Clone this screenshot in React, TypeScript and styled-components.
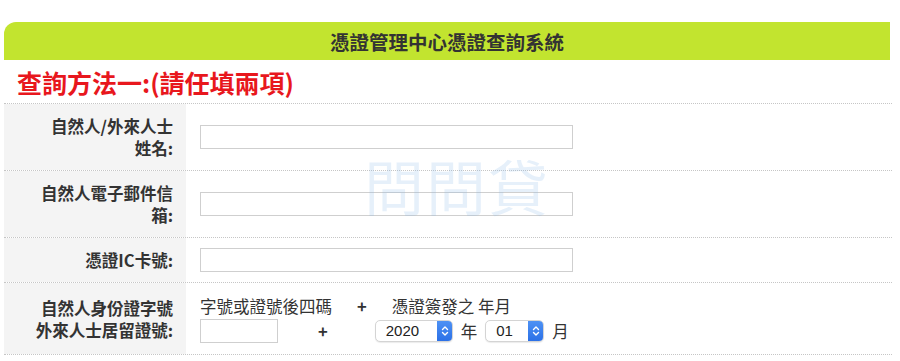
import styled, { createGlobalStyle } from "styled-components";

const Global = createGlobalStyle`
    body {
        margin: 0;
        background: #fff;
        font-family: "Noto Sans CJK TC", "Noto Sans", sans-serif;
        color: #333;
    }
`;

function App() {
    return (
        <>
            <Global />
            <Wrapper>
                <Header>憑證管理中心憑證查詢系統</Header>
                <Title>查詢方法一:(請任填兩項)</Title>
                <Table>
                    <Row $h={66}>
                        <Label>自然人/外來人士<br />姓名:</Label>
                        <Cell><TextInput $w={373} /></Cell>
                    </Row>
                    <Row $h={66}>
                        <Label>自然人電子郵件信<br />箱:</Label>
                        <Cell><TextInput $w={373} /></Cell>
                    </Row>
                    <Row $h={44}>
                        <Label>憑證IC卡號:</Label>
                        <Cell><TextInput $w={373} /></Cell>
                    </Row>
                    <Row $h={71}>
                        <Label>自然人身份證字號<br />外來人士居留證號:</Label>
                        <Cell>
                            <Line>
                                <span>字號或證號後四碼</span>
                                <Plus $left={25} $right={25}>+</Plus>
                                <span>憑證簽發之 年月</span>
                            </Line>
                            <Line>
                                <TextInput $w={78} />
                                <Plus $left={40} $right={47}>+</Plus>
                                <Select $w={78}>
                                    <span>2020</span>
                                    <Stepper><Arrows /></Stepper>
                                </Select>
                                <Unit>年</Unit>
                                <Select $w={59}>
                                    <span>01</span>
                                    <Stepper><Arrows /></Stepper>
                                </Select>
                                <Unit>月</Unit>
                            </Line>
                        </Cell>
                    </Row>
                </Table>
                <Watermark>問問貸</Watermark>
            </Wrapper>
        </>
    );
}

export default App;

function Arrows() {
    return (
        <svg width="8" height="12" viewBox="0 0 8 12">
            <path d="M1.5 4.5 L4 2 L6.5 4.5 M1.5 7.5 L4 10 L6.5 7.5" stroke="#fff" strokeWidth="1.4" fill="none" strokeLinecap="round" strokeLinejoin="round" />
        </svg>
    );
}

const Wrapper = styled.div`
    position: relative;
    width: 888px;
    margin-left: 4px;
    padding-top: 22px;
`;

const Header = styled.div`
    width: 886px;
    height: 38px;
    background: #c2e42f;
    border-top-left-radius: 12px;
    display: flex;
    align-items: center;
    justify-content: center;
    font-size: 19.5px;
    font-weight: 700;
    color: #333;
`;

const Title = styled.div`
    height: 43px;
    display: flex;
    align-items: center;
    padding-left: 13px;
    font-size: 25px;
    font-weight: 700;
    color: #e8171d;
`;

const Table = styled.div`
    border-bottom: 1px dotted #c6c6c6;
`;

const Row = styled.div<{ $h: number }>`
    display: flex;
    height: ${p => p.$h}px;
    border-top: 1px dotted #c6c6c6;
`;

const Label = styled.div`
    width: 169px;
    flex-shrink: 0;
    padding-right: 13px;
    background: #f4f4f4;
    display: flex;
    align-items: center;
    justify-content: flex-end;
    text-align: right;
    font-size: 16.5px;
    font-weight: 700;
    line-height: 22px;
    color: #333;
`;

const Cell = styled.div`
    flex: 1;
    padding-left: 14px;
    display: flex;
    flex-direction: column;
    justify-content: center;
    gap: 2px;
`;

const Line = styled.div`
    display: flex;
    align-items: center;
    font-size: 16.5px;
    color: #333;
    line-height: 22px;
`;

const Plus = styled.span<{ $left: number; $right: number }>`
    font-weight: 700;
    margin: 0 ${p => p.$right}px 0 ${p => p.$left}px;
`;

const TextInput = styled.input.attrs({ type: "text" })<{ $w: number }>`
    box-sizing: border-box;
    width: ${p => p.$w}px;
    height: 24px;
    border: 1px solid #cfcfcf;
    background: #fff;
    margin: 0;
    padding: 0 4px;
    outline: none;
`;

const Select = styled.div<{ $w: number }>`
    box-sizing: border-box;
    width: ${p => p.$w}px;
    height: 22px;
    border: 1px solid #d4d4d4;
    border-radius: 5px;
    background: #fff;
    box-shadow: 0 1px 1px rgba(0, 0, 0, 0.08);
    display: flex;
    align-items: center;
    justify-content: space-between;
    padding-left: 10px;
    font-size: 15px;
    font-family: "Liberation Sans", sans-serif;
    color: #222;
    overflow: hidden;
`;

const Stepper = styled.div`
    width: 16px;
    height: 22px;
    margin-right: -1px;
    background: linear-gradient(#4f93f5, #2a6fe6);
    border-radius: 0 5px 5px 0;
    display: flex;
    align-items: center;
    justify-content: center;
`;

const Unit = styled.span`
    margin: 0 8px 0 8px;
`;

const Watermark = styled.div`
    position: absolute;
    left: 360px;
    top: 150px;
    font-size: 60px;
    line-height: 70px;
    letter-spacing: 2px;
    color: rgba(140, 185, 230, 0.22);
    pointer-events: none;
    font-weight: 400;
`;
